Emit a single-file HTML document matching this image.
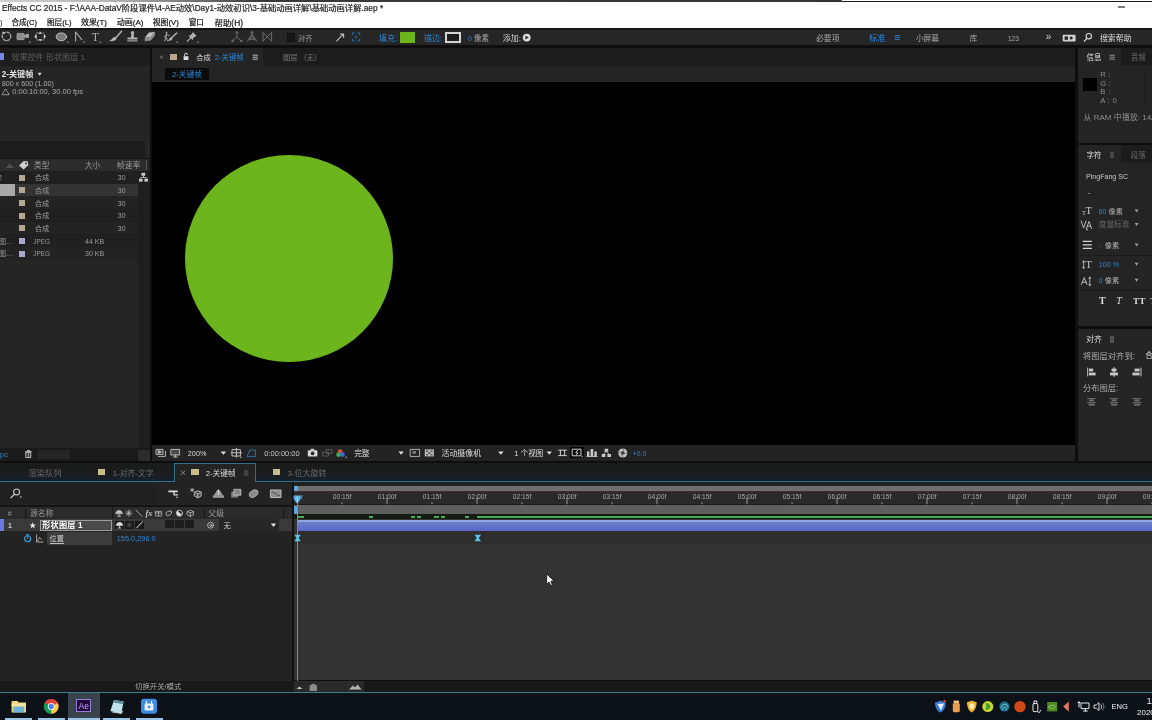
<!DOCTYPE html>
<html lang="zh">
<head>
<meta charset="utf-8">
<title>After Effects CC 2015</title>
<style>
*{box-sizing:border-box;margin:0;padding:0}
html,body{width:1152px;height:720px;overflow:hidden;background:#0e0e0e}
body{position:relative;font-family:"Liberation Sans","Noto Sans CJK SC",sans-serif;font-size:8px;color:#a8a8a8}
.a{position:absolute}
.t{position:absolute;white-space:nowrap;line-height:14px;height:14px}
svg{overflow:visible}
</style>
</head>
<body>
<!-- ===== title + menu ===== -->
<div class="a" style="left:0;top:0;width:1152px;height:27.8px;background:#fff"></div>
<div class="a" style="left:0;top:0;width:841px;height:1.6px;background:linear-gradient(90deg,#d0d0d0 0,#b0b0b0 120px,#3a3a3a 260px,#333 100%)"></div>
<div class="a" style="left:841px;top:0.9px;width:311px;height:1.1px;background:#1a1a1a"></div>
<div class="a" style="left:840.5px;top:0;width:1px;height:2px;background:#555"></div>
<div class="a" style="left:1118px;top:6px;width:7px;height:2px;background:#7a7a7a"></div>
<!-- ===== toolbar ===== -->
<div class="a" style="left:0;top:27.8px;width:1152px;height:2.4px;background:#141414"></div>
<div class="a" style="left:0;top:30px;width:1152px;height:15.2px;background:#262626"></div>
<div class="a" style="left:286.5px;top:33px;width:8.5px;height:8.5px;background:#181818;border:1px solid #101010"></div>
<div class="a" style="left:400px;top:32px;width:15px;height:11px;background:#6db51c"></div>
<div class="a" style="left:445px;top:32px;width:15.5px;height:11px;background:#1e1e1e;border:2px solid #d4d4d4"></div>

<!-- ===== left panel ===== -->
<div class="a" style="left:0;top:48px;width:150px;height:18px;background:#1d1d1d"></div>
<div class="a" style="left:0;top:66px;width:150px;height:395px;background:#252525"></div>
<div class="a" style="left:0;top:52.6px;width:4.2px;height:7.8px;background:#7b86e8"></div>
<div class="a" style="left:0;top:140.7px;width:144.5px;height:17.5px;background:#1c1c1c"></div>
<div class="a" style="left:0;top:157.6px;width:150px;height:1px;background:#151515"></div>
<div class="a" style="left:0;top:158.5px;width:146px;height:13px;background:#2c2c2c"></div>
<div class="a" style="left:145.5px;top:160px;width:1px;height:10px;background:#555"></div>
<div class="a" style="left:0;top:171.3px;width:138px;height:12.3px;background:#202020"></div>
<div class="a" style="left:0;top:183.6px;width:138px;height:12.8px;background:#343434"></div>
<div class="a" style="left:0;top:184.2px;width:15px;height:11.6px;background:#a8a8a8"></div>
<div class="a" style="left:0;top:196.4px;width:138px;height:12.6px;background:#232323"></div>
<div class="a" style="left:0;top:209px;width:138px;height:12.8px;background:#202020"></div>
<div class="a" style="left:0;top:221.8px;width:138px;height:12.6px;background:#232323"></div>
<div class="a" style="left:0;top:234.4px;width:138px;height:12.8px;background:#202020"></div>
<div class="a" style="left:0;top:247.2px;width:138px;height:12.8px;background:#232323"></div>
<div class="a" style="left:138px;top:171.3px;width:12px;height:277px;background:#1e1e1e"></div>
<div class="a" style="left:0;top:448px;width:150px;height:13px;background:#1a1a1a"></div>
<div class="a" style="left:138px;top:450px;width:12px;height:11px;background:#2c2c2c"></div>
<div class="a" style="left:38px;top:450px;width:32px;height:9px;background:#262626"></div>
<!-- file label squares -->
<div class="a" style="left:19.2px;top:174.6px;width:6px;height:6px;background:#b5a88e"></div>
<div class="a" style="left:19.2px;top:187.4px;width:6px;height:6px;background:#b5a88e"></div>
<div class="a" style="left:19.2px;top:200.2px;width:6px;height:6px;background:#b5a88e"></div>
<div class="a" style="left:19.2px;top:212.8px;width:6px;height:6px;background:#b5a88e"></div>
<div class="a" style="left:19.2px;top:225.4px;width:6px;height:6px;background:#b5a88e"></div>
<div class="a" style="left:19.2px;top:238.2px;width:6px;height:6px;background:#a9a9d0"></div>
<div class="a" style="left:19.2px;top:250.8px;width:6px;height:6px;background:#a9a9d0"></div>

<!-- ===== comp panel ===== -->
<div class="a" style="left:152.3px;top:48px;width:923px;height:18.3px;background:#1c1c1c"></div>
<div class="a" style="left:152.3px;top:48px;width:111.2px;height:18.3px;background:#242424"></div>
<div class="a" style="left:152.3px;top:66.3px;width:923px;height:15.5px;background:#242424"></div>
<div class="a" style="left:165.4px;top:68.3px;width:43.6px;height:11.3px;background:#0b0b0b"></div>
<div class="a" style="left:169.7px;top:53.5px;width:6.9px;height:6.5px;background:#b5a88e"></div>
<div class="a" style="left:152.3px;top:81.8px;width:923px;height:363.4px;background:#000"></div>
<div class="a" style="left:184.9px;top:154.7px;width:207.8px;height:207.8px;border-radius:50%;background:#6db51c"></div>
<div class="a" style="left:152.3px;top:445.2px;width:923px;height:15.6px;background:#232323"></div>
<div class="a" style="left:570.3px;top:447px;width:14px;height:11.2px;background:#080808"></div>

<!-- ===== right panels ===== -->
<div class="a" style="left:1078px;top:47.6px;width:74px;height:17.8px;background:#1c1c1c"></div>
<div class="a" style="left:1078px;top:47.6px;width:42.8px;height:17.8px;background:#242424"></div>
<div class="a" style="left:1078px;top:65.4px;width:74px;height:77.2px;background:#242424"></div>
<div class="a" style="left:1083px;top:77.9px;width:13.8px;height:12.8px;background:#000"></div>
<div class="a" style="left:1145px;top:72px;width:1px;height:34px;background:#1f1f1f"></div>

<div class="a" style="left:1078px;top:145px;width:74px;height:18.2px;background:#1c1c1c"></div>
<div class="a" style="left:1078px;top:145px;width:42.8px;height:18.2px;background:#242424"></div>
<div class="a" style="left:1078px;top:163.2px;width:74px;height:163px;background:#242424"></div>
<div class="a" style="left:1110.2px;top:151.6px;width:4px;height:6.8px;background:#484848"></div>
<div class="a" style="left:1080px;top:255px;width:72px;height:1px;background:#1b1b1b"></div>
<div class="a" style="left:1080px;top:290.2px;width:72px;height:1px;background:#1b1b1b"></div>

<div class="a" style="left:1078px;top:329.2px;width:74px;height:131.6px;background:#242424"></div>
<div class="a" style="left:1110px;top:336.4px;width:4px;height:6.4px;background:#505050"></div>

<!-- ===== timeline ===== -->
<div class="a" style="left:0;top:463px;width:1152px;height:18.4px;background:linear-gradient(#1b1b1b 0,#1b1c1d 50%,#15212a 100%)"></div>
<div class="a" style="left:0;top:481.4px;width:293px;height:23.2px;background:#232323"></div>
<div class="a" style="left:0;top:484px;width:158px;height:19px;background:#202020"></div>
<div class="a" style="left:0;top:504.6px;width:293px;height:2px;background:#141414"></div>
<div class="a" style="left:0;top:506.5px;width:293px;height:12.5px;background:#2b2b2b"></div>
<div class="a" style="left:0;top:519.3px;width:293px;height:12px;background:#3a3a3a"></div>
<div class="a" style="left:0;top:531.3px;width:293px;height:149.7px;background:#232323"></div>
<div class="a" style="left:0;top:519.3px;width:3.6px;height:12px;background:#6a7ae0"></div>
<!-- header dividers -->
<div class="a" style="left:25.4px;top:507.5px;width:1px;height:10.5px;background:#161616"></div>
<div class="a" style="left:112px;top:507.5px;width:1px;height:10.5px;background:#161616"></div>
<div class="a" style="left:204.4px;top:507.5px;width:1px;height:10.5px;background:#161616"></div>
<div class="a" style="left:282.6px;top:507.5px;width:1px;height:10.5px;background:#161616"></div>
<!-- layer name box -->
<div class="a" style="left:40px;top:519.5px;width:71.7px;height:11.2px;background:#4a4a4a;border:1px solid #9c9c9c"></div>
<div class="a" style="left:47px;top:532px;width:65px;height:12.6px;background:#3d3d3d"></div>
<div class="a" style="left:49.5px;top:542.6px;width:14.3px;height:1px;background:#bdbdbd"></div>
<!-- switches -->
<div class="a" style="left:115.2px;top:520.8px;width:8.5px;height:8px;background:#181818"></div>
<div class="a" style="left:125px;top:520.8px;width:8.5px;height:8px;background:#181818"></div>
<div class="a" style="left:135.2px;top:520.8px;width:8.7px;height:8px;background:#181818"></div>
<div class="a" style="left:165.4px;top:520px;width:8.3px;height:8.2px;background:#1c1c1c"></div>
<div class="a" style="left:175.4px;top:520px;width:8.6px;height:8.2px;background:#1c1c1c"></div>
<div class="a" style="left:185.4px;top:520px;width:8.2px;height:8.2px;background:#1c1c1c"></div>
<div class="a" style="left:219px;top:519.3px;width:60px;height:12px;background:#262626"></div>
<!-- active tab -->
<div class="a" style="left:174px;top:463px;width:82px;height:19px;background:#232323;border:1px solid #2f6f8a;border-bottom:none"></div>
<div class="a" style="left:0;top:481px;width:174px;height:1px;background:#2f6f8a"></div>
<div class="a" style="left:256px;top:481px;width:896px;height:1px;background:#2f6f8a"></div>
<div class="a" style="left:98px;top:469.3px;width:7px;height:6.2px;background:#c8bd8a"></div>
<div class="a" style="left:191.4px;top:469.3px;width:7.6px;height:6.2px;background:#c8bd8a"></div>
<div class="a" style="left:273px;top:469.3px;width:7px;height:6.2px;background:#c8bd8a"></div>

<!-- time area -->
<div class="a" style="left:291.6px;top:482px;width:2px;height:199px;background:#111"></div>
<div class="a" style="left:293.5px;top:482px;width:858.5px;height:4.4px;background:#222"></div>
<div class="a" style="left:293.5px;top:486.2px;width:858.5px;height:4.8px;background:#6e6e6e"></div>
<div class="a" style="left:293.5px;top:486.2px;width:4.5px;height:4.8px;background:#5aa8e0"></div>
<div class="a" style="left:293.5px;top:491px;width:858.5px;height:13.4px;background:#2a2a2a"></div>
<div class="a" style="left:293.5px;top:491px;width:858.5px;height:1px;background:#43283f"></div>
<div class="a" style="left:293.5px;top:504.2px;width:858.5px;height:0.7px;background:#1a1a1a"></div>
<div class="a" style="left:293.5px;top:504.8px;width:858.5px;height:9.2px;background:#5f5f5f"></div>
<div class="a" style="left:293.5px;top:514px;width:858.5px;height:5.4px;background:#121a12"></div>
<div class="a" style="left:293.5px;top:519.4px;width:858.5px;height:11.8px;background:#333"></div>
<div class="a" style="left:297.5px;top:519.6px;width:854.5px;height:11.4px;background:linear-gradient(#90a6e2 0,#90a6e2 1.5px,#6b80cc 2.2px,#5a66c8 100%)"></div>
<div class="a" style="left:293.5px;top:531.2px;width:858.5px;height:12.6px;background:#2e2e2e"></div>
<div class="a" style="left:293.5px;top:543.8px;width:858.5px;height:136.4px;background:#333"></div>
<!-- green cache -->
<div class="a" style="left:297.5px;top:515.6px;width:6px;height:2.4px;background:#4aa858"></div>
<div class="a" style="left:369.2px;top:515.6px;width:4.2px;height:2.4px;background:#4aa858"></div>
<div class="a" style="left:410.8px;top:515.6px;width:4.2px;height:2.4px;background:#4aa858"></div>
<div class="a" style="left:417.2px;top:515.6px;width:3.8px;height:2.4px;background:#4aa858"></div>
<div class="a" style="left:434.4px;top:515.6px;width:4.2px;height:2.4px;background:#4aa858"></div>
<div class="a" style="left:440.6px;top:515.6px;width:4.4px;height:2.4px;background:#4aa858"></div>
<div class="a" style="left:465px;top:515.6px;width:4.2px;height:2.4px;background:#4aa858"></div>
<div class="a" style="left:476.7px;top:515.6px;width:675.3px;height:2.4px;background:#4aa858"></div>
<!-- work area handle + playhead line -->
<div class="a" style="left:293.5px;top:505.6px;width:3.6px;height:8.2px;background:#5aa8e0;border-radius:1px"></div>
<div class="a" style="left:296.7px;top:503px;width:1px;height:178px;background:#3aa0e0"></div>
<!-- bottom bar -->
<div class="a" style="left:0;top:681px;width:1152px;height:11px;background:#191919"></div>
<div class="a" style="left:293.5px;top:681px;width:70px;height:11px;background:#2a2a2a"></div>

<!-- ===== taskbar ===== -->
<div class="a" style="left:0;top:692px;width:1152px;height:28px;background:#0c1218"></div>
<div class="a" style="left:0;top:692px;width:1152px;height:1px;background:#3b7d96"></div>
<div class="a" style="left:68px;top:693px;width:31.8px;height:27px;background:#39434b"></div>
<div class="a" style="left:5.2px;top:718px;width:26.8px;height:2px;background:#9cc4e4"></div>
<div class="a" style="left:37.8px;top:718px;width:26.8px;height:2px;background:#9cc4e4"></div>
<div class="a" style="left:68px;top:718px;width:31.8px;height:2px;background:#9cc4e4"></div>
<div class="a" style="left:103.3px;top:718px;width:26.6px;height:2px;background:#9cc4e4"></div>
<div class="a" style="left:135.8px;top:718px;width:27px;height:2px;background:#9cc4e4"></div>
<div class="a" style="left:76.4px;top:699.4px;width:14.7px;height:13.1px;background:#1f0a3a;border:1px solid #9a7be0"></div>
<!-- ===== text ===== -->
<div id="txt" style="position:absolute;left:0;top:0;width:1152px;height:720px;will-change:transform">
<div class="t" style="left:2.0px;top:1.3px;font-size:8.29px;color:#222;letter-spacing:0.01px;-webkit-text-stroke:0.2px #222">Effects CC 2015 - F:\AAA-DataV阶段课件\4-AE动效\Day1-动效初识\3-基础动画详解\基础动画详解.aep *</div>
<div class="t" style="left:0.0px;top:15.6px;font-size:7.7px;color:#222">)</div>
<div class="t" style="left:11.5px;top:15.6px;font-size:7.54px;color:#111;letter-spacing:-0.01px;-webkit-text-stroke:0.2px #111">合成(C)</div>
<div class="t" style="left:46.9px;top:15.6px;font-size:7.64px;color:#111;letter-spacing:0.01px;-webkit-text-stroke:0.2px #111">图层(L)</div>
<div class="t" style="left:81.0px;top:15.6px;font-size:7.94px;color:#111;-webkit-text-stroke:0.2px #111">效果(T)</div>
<div class="t" style="left:116.7px;top:15.6px;font-size:8.02px;color:#111;-webkit-text-stroke:0.2px #111">动画(A)</div>
<div class="t" style="left:152.8px;top:15.6px;font-size:7.81px;color:#111;-webkit-text-stroke:0.2px #111">视图(V)</div>
<div class="t" style="left:188.7px;top:15.6px;font-size:7.65px;color:#111;letter-spacing:0.02px;-webkit-text-stroke:0.2px #111">窗口</div>
<div class="t" style="left:214.6px;top:15.6px;font-size:8.4px;color:#111;-webkit-text-stroke:0.2px #111">帮助(H)</div>
<div class="t" style="left:91.7px;top:30.2px;font-size:12px;color:#b0b0b0;font-family:'Liberation Serif',serif">T</div>
<div class="t" style="left:298.0px;top:31.9px;font-size:7.31px;color:#969696;letter-spacing:0.01px">对齐</div>
<div class="t" style="left:378.7px;top:31.9px;font-size:8.14px;color:#2b86d6;letter-spacing:0.29px">填充:</div>
<div class="t" style="left:424.0px;top:31.9px;font-size:7.91px;color:#2b86d6;letter-spacing:-0.01px">描边:</div>
<div class="t" style="left:468.0px;top:31.9px;font-size:6.8px;color:#2b86d6">0</div>
<div class="t" style="left:474.0px;top:31.9px;font-size:7.5px;color:#a8a8a8">像素</div>
<div class="t" style="left:502.8px;top:31.9px;font-size:8.0px;color:#cfcfcf;letter-spacing:-0.02px">添加:</div>
<div class="t" style="left:816.0px;top:31.9px;font-size:7.84px;color:#a8a8a8">必要项</div>
<div class="t" style="left:869.0px;top:31.9px;font-size:8.26px;color:#2b86d6">标准</div>
<div class="t" style="left:915.9px;top:31.9px;font-size:7.71px;color:#a8a8a8">小屏幕</div>
<div class="t" style="left:969.7px;top:31.9px;font-size:7.6px;color:#a8a8a8">库</div>
<div class="t" style="left:1008.0px;top:31.9px;font-size:6.47px;color:#a8a8a8">123</div>
<div class="t" style="left:1045.7px;top:30.0px;font-size:10px;color:#d0d0d0">»</div>
<div class="t" style="left:1099.9px;top:31.9px;font-size:7.95px;color:#dcdcdc;letter-spacing:0.02px">搜索帮助</div>
<div class="t" style="left:11.4px;top:51.1px;font-size:8.08px;color:#5e5e5e">效果控件 形状图层 1</div>
<div class="t" style="left:1.7px;top:67.9px;font-size:8.13px;color:#e4e4e4;font-weight:bold">2-关键帧</div>
<div class="t" style="left:1.7px;top:76.6px;font-size:7.17px;color:#a8a8a8">800 x 600 (1.00)</div>
<div class="t" style="left:12.2px;top:85.3px;font-size:7.53px;color:#a8a8a8;letter-spacing:0.01px">0:00:10:00, 30.00 fps</div>
<div class="t" style="left:34.0px;top:158.9px;font-size:7.65px;color:#9a9a9a;letter-spacing:0.02px">类型</div>
<div class="t" style="left:85.0px;top:158.9px;font-size:7.5px;color:#9a9a9a">大小</div>
<div class="t" style="left:116.7px;top:158.9px;font-size:7.87px;color:#9a9a9a">帧速率</div>
<div class="t" style="left:34.7px;top:170.9px;font-size:7.3px;color:#9a9a9a;letter-spacing:0.01px">合成</div>
<div class="t" style="left:117.4px;top:170.9px;font-size:7.45px;color:#9a9a9a;letter-spacing:0.02px">30</div>
<div class="t" style="left:34.7px;top:183.8px;font-size:7.3px;color:#9a9a9a;letter-spacing:0.01px">合成</div>
<div class="t" style="left:117.4px;top:183.8px;font-size:7.45px;color:#9a9a9a;letter-spacing:0.02px">30</div>
<div class="t" style="left:34.7px;top:196.6px;font-size:7.3px;color:#9a9a9a;letter-spacing:0.01px">合成</div>
<div class="t" style="left:117.4px;top:196.6px;font-size:7.45px;color:#9a9a9a;letter-spacing:0.02px">30</div>
<div class="t" style="left:34.7px;top:209.3px;font-size:7.3px;color:#9a9a9a;letter-spacing:0.01px">合成</div>
<div class="t" style="left:117.4px;top:209.3px;font-size:7.45px;color:#9a9a9a;letter-spacing:0.02px">30</div>
<div class="t" style="left:34.7px;top:221.9px;font-size:7.3px;color:#9a9a9a;letter-spacing:0.01px">合成</div>
<div class="t" style="left:117.4px;top:221.9px;font-size:7.45px;color:#9a9a9a;letter-spacing:0.02px">30</div>
<div class="t" style="left:33.3px;top:234.6px;font-size:6.39px;color:#9a9a9a;letter-spacing:0.01px">JPEG</div>
<div class="t" style="left:33.3px;top:247.3px;font-size:6.39px;color:#9a9a9a;letter-spacing:0.01px">JPEG</div>
<div class="t" style="left:85.0px;top:234.6px;font-size:7.09px;color:#9a9a9a">44 KB</div>
<div class="t" style="left:85.0px;top:247.3px;font-size:7.09px;color:#9a9a9a">30 KB</div>
<div class="t" style="left:-2.0px;top:170.9px;font-size:7px;color:#9a9a9a">2</div>
<div class="t" style="left:-1.0px;top:234.6px;font-size:7.0px;color:#9a9a9a">图…</div>
<div class="t" style="left:-1.0px;top:247.3px;font-size:7.0px;color:#9a9a9a">图…</div>
<div class="t" style="left:0.0px;top:447.6px;font-size:7.56px;color:#2b86d6;letter-spacing:0.02px">pc</div>
<div class="t" style="left:196.3px;top:50.8px;font-size:7.26px;color:#dcdcdc;letter-spacing:-0.02px">合成</div>
<div class="t" style="left:214.8px;top:50.8px;font-size:7.46px;color:#2b86d6">2-关键帧</div>
<div class="t" style="left:283.0px;top:50.8px;font-size:7.26px;color:#7a7a7a;letter-spacing:0.01px">图层 （无）</div>
<div class="t" style="left:172.0px;top:67.6px;font-size:7.72px;color:#2b86d6;letter-spacing:-0.01px">2-关键帧</div>
<div class="t" style="left:187.8px;top:446.6px;font-size:7.27px;color:#d8d8d8">200%</div>
<div class="t" style="left:264.2px;top:446.6px;font-size:7.51px;color:#c8c8c8;letter-spacing:0.01px">0:00:00:00</div>
<div class="t" style="left:354.2px;top:446.6px;font-size:7.66px;color:#dcdcdc;letter-spacing:-0.03px">完整</div>
<div class="t" style="left:441.6px;top:446.6px;font-size:7.89px;color:#dcdcdc;letter-spacing:0.01px">活动摄像机</div>
<div class="t" style="left:514.2px;top:446.6px;font-size:7.62px;color:#dcdcdc">1 个视图</div>
<div class="t" style="left:632.8px;top:446.6px;font-size:6.78px;color:#2b86d6;letter-spacing:0.01px">+0.0</div>
<div class="t" style="left:1086.4px;top:50.8px;font-size:7.51px;color:#dcdcdc">信息</div>
<div class="t" style="left:1130.8px;top:50.8px;font-size:7.46px;color:#686868;letter-spacing:-0.02px">音频</div>
<div class="t" style="left:1100.2px;top:68.0px;font-size:7.7px;color:#8c8c8c;letter-spacing:0.29px">R :</div>
<div class="t" style="left:1100.2px;top:76.6px;font-size:7.7px;color:#8c8c8c;letter-spacing:0.07px">G :</div>
<div class="t" style="left:1100.2px;top:85.2px;font-size:7.7px;color:#8c8c8c;letter-spacing:0.50px">B :</div>
<div class="t" style="left:1100.2px;top:93.9px;font-size:7.7px;color:#8c8c8c;letter-spacing:0.28px">A :  0</div>
<div class="t" style="left:1083.4px;top:111.2px;font-size:8.03px;color:#8c8c8c;letter-spacing:0.01px">从 RAM 中播放: 14/</div>
<div class="t" style="left:1086.4px;top:148.6px;font-size:7.51px;color:#dcdcdc">字符</div>
<div class="t" style="left:1130.8px;top:148.6px;font-size:7.46px;color:#686868;letter-spacing:-0.02px">段落</div>
<div class="t" style="left:1086.0px;top:169.8px;font-size:7.07px;color:#c8c8c8">PingFang SC</div>
<div class="t" style="left:1088.0px;top:185.8px;font-size:7.4px;color:#c8c8c8">-</div>
<div class="t" style="left:1098.7px;top:204.6px;font-size:6.83px;color:#2b86d6;letter-spacing:-0.01px">60</div>
<div class="t" style="left:1108.6px;top:204.6px;font-size:7.1px;color:#b0b0b0;letter-spacing:0.01px">像素</div>
<div class="t" style="left:1098.7px;top:217.9px;font-size:7.71px;color:#686868">度量标准</div>
<div class="t" style="left:1098.7px;top:239.1px;font-size:7px;color:#686868">-</div>
<div class="t" style="left:1104.8px;top:239.1px;font-size:7.25px;color:#b0b0b0;letter-spacing:-0.02px">像素</div>
<div class="t" style="left:1098.7px;top:257.9px;font-size:7.27px;color:#2b86d6">100 %</div>
<div class="t" style="left:1098.7px;top:273.9px;font-size:6.8px;color:#2b86d6">0</div>
<div class="t" style="left:1104.8px;top:273.9px;font-size:7.25px;color:#b0b0b0;letter-spacing:-0.02px">像素</div>
<div class="t" style="left:1099.0px;top:294.1px;font-size:10px;color:#dcdcdc;font-family:'Liberation Serif',serif;font-weight:bold">T</div>
<div class="t" style="left:1116.2px;top:294.1px;font-size:10px;color:#dcdcdc;font-family:'Liberation Serif',serif;font-style:italic">T</div>
<div class="t" style="left:1133.0px;top:294.1px;font-size:9.21px;color:#dcdcdc;letter-spacing:0.02px;font-family:'Liberation Serif',serif;font-weight:bold">TT</div>
<div class="t" style="left:1150.3px;top:294.6px;font-size:8px;color:#dcdcdc;font-family:'Liberation Serif',serif;font-weight:bold">T</div>
<div class="t" style="left:1082.0px;top:205.8px;font-size:6.5px;color:#c8c8c8;font-family:'Liberation Serif',serif">T</div>
<div class="t" style="left:1085.4px;top:204.2px;font-size:10.5px;color:#c8c8c8;font-family:'Liberation Serif',serif">T</div>
<div class="t" style="left:1085.6px;top:258.2px;font-size:10.5px;color:#c8c8c8;font-family:'Liberation Serif',serif">T</div>
<div class="t" style="left:1086.0px;top:332.9px;font-size:8.01px;color:#dcdcdc">对齐</div>
<div class="t" style="left:1083.0px;top:349.4px;font-size:8.29px;color:#a8a8a8">将图层对齐到:</div>
<div class="t" style="left:1145.3px;top:349.4px;font-size:7.6px;color:#dcdcdc">合</div>
<div class="t" style="left:1083.0px;top:381.9px;font-size:8.24px;color:#a8a8a8;letter-spacing:-0.01px">分布图层:</div>
<div class="t" style="left:28.6px;top:466.6px;font-size:8.26px;color:#6a6a6a">渲染队列</div>
<div class="t" style="left:112.8px;top:466.6px;font-size:7.82px;color:#6a6a6a">1-对齐-文字</div>
<div class="t" style="left:205.7px;top:466.6px;font-size:7.72px;color:#dcdcdc;letter-spacing:-0.01px">2-关键帧</div>
<div class="t" style="left:287.5px;top:466.6px;font-size:8.0px;color:#6a6a6a">3-位大旋转</div>
<div class="t" style="left:7.8px;top:506.6px;font-size:7px;color:#9a9a9a">#</div>
<div class="t" style="left:30.0px;top:506.6px;font-size:7.8px;color:#9a9a9a">源名称</div>
<div class="t" style="left:208.3px;top:506.6px;font-size:7.85px;color:#9a9a9a;letter-spacing:0.01px">父级</div>
<div class="t" style="left:8.0px;top:519.0px;font-size:7px;color:#cfcfcf;font-weight:bold">1</div>
<div class="t" style="left:42.3px;top:519.0px;font-size:8.14px;color:#fff;letter-spacing:0.18px;font-weight:bold">形状图层 1</div>
<div class="t" style="left:223.4px;top:519.0px;font-size:7.4px;color:#cfcfcf">无</div>
<div class="t" style="left:49.5px;top:532.1px;font-size:7.15px;color:#cfcfcf">位置</div>
<div class="t" style="left:116.7px;top:532.1px;font-size:7.39px;color:#2b86d6">155.0,296.0</div>
<div class="t" style="left:332.7px;top:490.4px;font-size:6.7px;color:#a8a8a8">00:15f</div>
<div class="t" style="left:377.7px;top:490.4px;font-size:6.7px;color:#a8a8a8">01:00f</div>
<div class="t" style="left:422.7px;top:490.4px;font-size:6.7px;color:#a8a8a8">01:15f</div>
<div class="t" style="left:467.7px;top:490.4px;font-size:6.7px;color:#a8a8a8">02:00f</div>
<div class="t" style="left:512.7px;top:490.4px;font-size:6.7px;color:#a8a8a8">02:15f</div>
<div class="t" style="left:557.7px;top:490.4px;font-size:6.7px;color:#a8a8a8">03:00f</div>
<div class="t" style="left:602.7px;top:490.4px;font-size:6.7px;color:#a8a8a8">03:15f</div>
<div class="t" style="left:647.7px;top:490.4px;font-size:6.7px;color:#a8a8a8">04:00f</div>
<div class="t" style="left:692.7px;top:490.4px;font-size:6.7px;color:#a8a8a8">04:15f</div>
<div class="t" style="left:737.7px;top:490.4px;font-size:6.7px;color:#a8a8a8">05:00f</div>
<div class="t" style="left:782.7px;top:490.4px;font-size:6.7px;color:#a8a8a8">05:15f</div>
<div class="t" style="left:827.7px;top:490.4px;font-size:6.7px;color:#a8a8a8">06:00f</div>
<div class="t" style="left:872.7px;top:490.4px;font-size:6.7px;color:#a8a8a8">06:15f</div>
<div class="t" style="left:917.7px;top:490.4px;font-size:6.7px;color:#a8a8a8">07:00f</div>
<div class="t" style="left:962.7px;top:490.4px;font-size:6.7px;color:#a8a8a8">07:15f</div>
<div class="t" style="left:1007.7px;top:490.4px;font-size:6.7px;color:#a8a8a8">08:00f</div>
<div class="t" style="left:1052.7px;top:490.4px;font-size:6.7px;color:#a8a8a8">08:15f</div>
<div class="t" style="left:1097.7px;top:490.4px;font-size:6.7px;color:#a8a8a8">09:00f</div>
<div class="t" style="left:1142.7px;top:490.4px;font-size:6.7px;color:#a8a8a8">09:15f</div>
<div class="t" style="left:301.0px;top:490.4px;font-size:6.2px;color:#a8a8a8">f</div>
<div class="t" style="left:135.0px;top:680.1px;font-size:7.4px;color:#a8a8a8">切换开关/模式</div>
<div class="t" style="left:1111.5px;top:700.0px;font-size:7.62px;color:#f0f0f0">ENG</div>
<div class="t" style="left:1146.8px;top:693.6px;font-size:8.57px;color:#f0f0f0;letter-spacing:0.01px">11</div>
<div class="t" style="left:1137.0px;top:706.2px;font-size:8.0px;color:#f0f0f0">2020</div>
<div class="t" style="left:78.6px;top:698.8px;font-size:8.49px;color:#c7a8ff;letter-spacing:0.01px">Ae</div>
</div>
<svg class="a" style="left:0;top:0" width="1152" height="720" viewBox="0 0 1152 720" fill="none" stroke-linecap="round" stroke-linejoin="round">
<!-- ===== toolbar icons ===== -->
<g stroke="#b0b0b0" stroke-width="1.2">
  <!-- rotate -->
  <circle cx="6.5" cy="36.4" r="4.3" stroke-dasharray="2.6 1.6" stroke-dashoffset="-3.4"/>
  <path d="M1.8 33.8 L3 31.4 L5.4 33.4 Z" fill="#c8c8c8" stroke="none"/>
  <!-- camera -->
  <rect x="17" y="33.4" width="7.2" height="6.3" rx="0.8" fill="#8c8c8c" stroke="#b4b4b4" stroke-width="0.7"/>
  <path d="M24.4 35 L28.8 33.4 L28.8 38 L24.4 37.4 Z" fill="#a8a8a8" stroke="none"/>
  <!-- pan behind -->
  <rect x="36" y="33" width="8.4" height="7" rx="1" stroke-dasharray="1.5 1.3" stroke-width="0.9" stroke="#9a9a9a"/>
  <path d="M34.2 36.5 L36.6 34.6 V38.4 Z M46.2 36.5 L43.8 34.6 V38.4 Z M40.2 31.8 L38.4 33.8 H42 Z M40.2 41.2 L38.4 39.2 H42 Z" fill="#d6d6d6" stroke="none"/>
  <!-- ellipse -->
  <ellipse cx="61.4" cy="36.8" rx="5.2" ry="3.9" fill="#7a7a7a" stroke="#c4c4c4" stroke-width="1"/>
  <!-- pen -->
  <path d="M75.6 41 V32 L81.8 39.6" stroke-width="1.1"/>
  <!-- brush -->
  <path d="M121.6 31.2 L115.4 38.2" stroke-width="1.5"/>
  <path d="M110 40.8 C112.4 41.4 116 40.6 116.2 38.6 L114.6 37.2 C112.4 37.6 112.4 39.8 110 40.8 Z" fill="#b8b8b8" stroke="#b8b8b8" stroke-width="0.5"/>
  <!-- stamp -->
  <circle cx="132.5" cy="32.9" r="1.8" fill="#b0b0b0" stroke="none"/>
  <path d="M131.4 33.6 h2.2 l0.5 3.8 h3.4 v2 h-10 v-2 h3.4 Z" fill="#b0b0b0" stroke="none"/>
  <rect x="127.3" y="40.2" width="10.2" height="1.3" fill="#9a9a9a" stroke="none"/>
  <!-- eraser -->
  <path d="M149 32.6 L155 32 L150.8 37 L144.8 37.6 Z" fill="#c0c0c0" stroke="none"/>
  <path d="M144.8 37.6 L150.8 37 L155 32 V35.4 L150.8 40.6 L144.8 41.2 Z" fill="#8e8e8e" stroke="none"/>
  <!-- roto -->
  <path d="M176.8 33 L171 38.4" stroke-width="1.5"/>
  <path d="M168.4 40.4 C170 40.8 172.4 40 172.2 38.4 L171 37.4 C169.6 37.8 169.8 39.4 168.4 40.4 Z" fill="#b8b8b8" stroke="#b8b8b8" stroke-width="0.4"/>
  <circle cx="166.6" cy="32.6" r="0.9" fill="#b0b0b0" stroke="none"/>
  <path d="M166.4 33.8 L166 37 L164.6 41 M166 37 L167.6 41 M166.4 34.6 L169.4 35.4 M166.2 34.8 L164.4 36.8" stroke-width="0.9"/>
  <!-- pin -->
  <path d="M192.8 32 L196.8 36 L195.2 36.4 L193 38.6 L192.8 40.2 L188.4 35.8 L190 35.6 L192.2 33.4 Z" fill="#b0b0b0" stroke="none"/>
  <path d="M190.6 38 L187.2 41.4" stroke-width="1.1"/>
</g>
<!-- small corner dots -->
<g fill="#8a8a8a" stroke="none">
  <rect x="29" y="41.4" width="1.4" height="1.4"/><rect x="67.2" y="41.4" width="1.4" height="1.4"/><rect x="83.4" y="41.4" width="1.4" height="1.4"/><rect x="99.6" y="41.4" width="1.4" height="1.4"/><rect x="176.4" y="41.4" width="1.4" height="1.4"/><rect x="197.4" y="41.4" width="1.4" height="1.4"/>
</g>
<!-- axis icons (dim) -->
<g stroke="#6c6c6c" stroke-width="1">
  <path d="M236.8 32.2 V37 L232.6 41 M236.8 37 L241.2 41"/><circle cx="236.8" cy="32.4" r="0.9"/><circle cx="232.6" cy="41" r="0.9"/><circle cx="241.2" cy="41" r="0.9"/>
  <path d="M252 32.2 V37 L247.4 41 M252 37 L256.6 41 M248.6 39 L252 34 L255.4 39 Z"/><circle cx="252" cy="32.4" r="0.9"/>
  <path d="M263 32.6 L271.6 41 M271.6 32.6 L263 41 M263 32.6 V41 M271.6 32.6 V41"/>
</g>
<!-- expand -->
<path d="M336.8 40.8 L343 34.4 M340.2 34 H343.6 V37.4" stroke="#c0c0c0" stroke-width="1.1"/>
<!-- blue bracket -->
<path d="M352.4 35 V33 H354.6 M357.6 33 H359.8 V35 M359.8 39 V41 H357.6 M354.6 41 H352.4 V39" stroke="#266fa8" stroke-width="1"/>
<rect x="354.8" y="35.6" width="2.6" height="2.8" fill="#1f5580"/>
<!-- add play -->
<circle cx="526.7" cy="37.6" r="3.9" fill="#dedede"/>
<path d="M525.4 35.6 L528.8 37.6 L525.4 39.6 Z" fill="#262626"/>
<!-- workspace menu -->
<path d="M895.2 35.6 H899.6 M895.2 37.6 H899.6 M895.2 39.6 H899.6" stroke="#2b86d6" stroke-width="0.9"/>
<!-- sync icon -->
<rect x="1062.7" y="34.8" width="12.9" height="6.6" rx="0.8" fill="#cfcfcf"/>
<rect x="1064.6" y="36.4" width="3.4" height="3.4" fill="#262626"/><circle cx="1071.2" cy="38.1" r="1.5" fill="#262626"/>
<!-- search -->
<circle cx="1088.8" cy="36.2" r="2.7" stroke="#d6d6d6" stroke-width="1.1"/>
<path d="M1086.8 38.4 L1084.4 41.2" stroke="#d6d6d6" stroke-width="1.3"/>

<!-- ===== left panel ===== -->
<path d="M37.8 72.8 H41.6 L39.7 75.8 Z" fill="#e0e0e0"/>
<path d="M2.2 94.4 L5.6 88.8 L9 94.4 Z" stroke="#a8a8a8" stroke-width="0.8"/>
<path d="M5.8 168 L9.8 163.6 L13.8 168 Z" fill="#505050"/>
<path d="M19 165.4 L23.4 161.2 L27.6 161.2 L28.4 165 L23.6 169.6 Z" fill="#cfcfcf"/><circle cx="26" cy="163.4" r="0.9" fill="#2c2c2c"/>
<!-- flowchart icon -->
<g fill="#c8c8c8"><rect x="141.4" y="172.8" width="3.8" height="3"/><rect x="139" y="178.6" width="3.6" height="3"/><rect x="144.4" y="178.6" width="3.6" height="3"/><rect x="143" y="175.8" width="0.9" height="1.8"/><rect x="140.4" y="177.2" width="6.2" height="0.8"/></g>
<!-- trash -->
<g stroke="#c8c8c8" stroke-width="0.9"><path d="M25.6 451.6 H31.4 M27.4 451.4 V450.4 H29.6 V451.4"/><rect x="26.2" y="452.6" width="4.6" height="5" fill="#3a3a3a"/><path d="M28.5 453.6 V456.6" stroke-width="0.7"/></g>

<!-- ===== comp tab ===== -->
<path d="M160.2 55.8 L162.8 58.4 M162.8 55.8 L160.2 58.4" stroke="#8a8a8a" stroke-width="0.8"/>
<!-- lock -->
<rect x="183.6" y="56.2" width="4.8" height="3.8" fill="#dcdcdc"/><path d="M184.6 56 V54.6 A1.4 1.4 0 0 1 187.4 54.6" stroke="#dcdcdc" stroke-width="1"/>
<path d="M253 55.2 H257.6 M253 57.2 H257.6 M253 59.2 H257.6" stroke="#c8c8c8" stroke-width="0.9"/>
<!-- info menu -->
<path d="M1109.8 55.2 H1114.6 M1109.8 57.2 H1114.6 M1109.8 59.2 H1114.6" stroke="#bcbcbc" stroke-width="0.7"/>

<!-- ===== viewer bottom bar ===== -->
<g stroke="#c4c4c4" stroke-width="0.9">
  <rect x="156.4" y="449.4" width="6.6" height="5" fill="#3a3a3a"/><path d="M158.4 456.4 H165.4 V451.4"/><path d="M158.6 450.6 L161.2 451.9 L158.6 453.2 Z" fill="#c4c4c4"/>
  <rect x="171.2" y="449.4" width="8.4" height="5.6" fill="#4a4a4a"/><path d="M173.4 457 H177.4 M175.4 455 V457"/>
</g>
<path d="M220.6 451.4 H226.2 L223.4 454.8 Z" fill="#dcdcdc"/>
<g stroke="#d0d0d0" stroke-width="0.9"><rect x="232.4" y="449.6" width="8" height="6.4"/><path d="M236.4 448.4 V457.2 M231.2 452.8 H241.6"/></g>
<rect x="240.2" y="456.6" width="1.2" height="1.2" fill="#c8c8c8"/>
<g stroke="#2f86c8" stroke-width="0.9"><path d="M247 456.4 L250 450 H255.4 V456.4 Z" stroke-dasharray="1.6 1"/></g>
<!-- camera -->
<rect x="307.8" y="450.2" width="9.6" height="6.2" rx="0.8" fill="#d6d6d6"/><rect x="310.6" y="448.8" width="3.6" height="1.6" fill="#d6d6d6"/><circle cx="312.6" cy="453.4" r="1.8" fill="#232323"/>
<g stroke="#5c5c5c" stroke-width="0.9"><rect x="323" y="452" width="5.6" height="4"/><rect x="326.4" y="449.6" width="5.6" height="4"/></g>
<circle cx="340.2" cy="451.6" r="2.4" fill="#e04a3a"/><circle cx="338.6" cy="454.6" r="2.4" fill="#3fae3f"/><circle cx="342.4" cy="454.6" r="2.4" fill="#3a6ae0"/>
<rect x="345.4" y="456.6" width="1.2" height="1.2" fill="#c8c8c8"/>
<path d="M398.4 451.4 H403.8 L401.1 454.8 Z" fill="#dcdcdc"/>
<g stroke="#c0c0c0" stroke-width="0.9"><rect x="410.6" y="449.4" width="9" height="7"/><rect x="412.4" y="451" width="3.6" height="2.8" fill="#7a7a7a" stroke="none"/></g>
<rect x="424.8" y="449.4" width="9" height="7" fill="#c4c4c4"/><g fill="#5a5a5a"><rect x="426" y="450.4" width="2.2" height="1.8"/><rect x="430.4" y="450.4" width="2.2" height="1.8"/><rect x="428.2" y="452.2" width="2.2" height="1.8"/><rect x="426" y="454" width="2.2" height="1.6"/><rect x="430.4" y="454" width="2.2" height="1.6"/></g>
<path d="M498 451.4 H503.6 L500.8 454.8 Z" fill="#dcdcdc"/>
<path d="M546.6 451.4 H552 L549.3 454.8 Z" fill="#dcdcdc"/>
<g stroke="#d0d0d0" stroke-width="1"><path d="M558.6 450.2 H566.4 M558.6 455.6 H566.4 M560.4 450.2 V455.6 M564.6 450.2 V455.6"/></g>
<g stroke="#e0e0e0" stroke-width="0.9"><rect x="572.6" y="449.2" width="8.4" height="6.6"/><path d="M577.4 450.4 L575.8 452.8 H577.8 L576.4 455"/></g><rect x="581.6" y="456.2" width="1.2" height="1.2" fill="#c8c8c8"/>
<g fill="#c8c8c8"><rect x="587" y="451.4" width="2.4" height="5"/><rect x="590.6" y="449" width="2.6" height="7.4"/><rect x="594.4" y="451.4" width="2.4" height="5"/><rect x="586.6" y="456" width="10.8" height="0.9"/></g>
<g fill="#c8c8c8"><rect x="604.6" y="448.8" width="3.6" height="3"/><rect x="601.8" y="454" width="3.6" height="3"/><rect x="607.4" y="454" width="3.6" height="3"/><path d="M606 451.6 L603.6 454.2 M606.8 451.6 L609 454.2" stroke="#c8c8c8" stroke-width="0.8"/></g>
<circle cx="622.8" cy="453" r="4.6" fill="#c4c4c4"/><circle cx="622.8" cy="453" r="1.7" fill="#3a3a3a"/><path d="M622.8 448.4 L624 451.6 M627.4 453 L624.2 454 M622.8 457.6 L621.6 454.4 M618.2 453 L621.4 452" stroke="#3a3a3a" stroke-width="0.6"/>

<!-- ===== char panel icons ===== -->
<g fill="#c8c8c8" stroke="none" font-family="Liberation Serif, serif">
</g>
<path d="M1134.6 209.6 H1138.6 L1136.6 212.6 Z M1134.6 223 H1138.6 L1136.6 226 Z M1134.6 243.4 H1138.6 L1136.6 246.4 Z M1134.6 262.8 H1138.6 L1136.6 265.8 Z M1134.6 278.8 H1138.6 L1136.6 281.8 Z" fill="#9a9a9a"/>
<path d="M1082.8 241.4 H1091.8 M1082.8 244.9 H1091.8 M1082.8 248.3 H1091.8" stroke="#d6d6d6" stroke-width="1.3" stroke-linecap="butt"/>
<!-- VA -->
<path d="M1081.2 221 L1083.6 228 L1086 221 M1086.4 228.6 L1089 221.4 L1091.6 228.6 M1087.4 226.2 H1090.6" stroke="#c8c8c8" stroke-width="0.9"/>
<circle cx="1087" cy="229.6" r="0.8" fill="#c8c8c8"/>
<!-- IT -->
<path d="M1083.6 261 V268.4 M1082.6 262.2 L1083.6 260.8 L1084.6 262.2 M1082.6 267.2 L1083.6 268.6 L1084.6 267.2" stroke="#c8c8c8" stroke-width="0.8"/>
<!-- A baseline -->
<path d="M1081.4 284.4 L1084.2 277.6 L1087 284.4 M1082.4 282.2 H1086 " stroke="#c8c8c8" stroke-width="0.9"/>
<path d="M1089.8 277 V285.6 M1088.8 278.4 L1089.8 277 L1090.8 278.4 M1088.8 284.4 L1089.8 285.8 L1090.8 284.4" stroke="#c8c8c8" stroke-width="0.8"/>

<!-- ===== align icons ===== -->
<g fill="#c8c8c8"><rect x="1087.2" y="367.6" width="1" height="8.8"/><rect x="1089" y="368.6" width="4.2" height="2.8"/><rect x="1089" y="372.6" width="6.6" height="2.8"/>
<rect x="1113.5" y="367.2" width="1" height="9.6"/><rect x="1111.6" y="368.6" width="4.8" height="2.8"/><rect x="1110" y="372.6" width="8" height="2.8"/>
<rect x="1140.5" y="367.6" width="1" height="8.8"/><rect x="1134.6" y="368.6" width="5" height="2.8"/><rect x="1132.4" y="372.6" width="7.2" height="2.8"/></g>
<g fill="#6e6e6e"><rect x="1087" y="398" width="9" height="0.9"/><rect x="1087" y="402" width="9" height="0.9"/><rect x="1089" y="399.4" width="5" height="2"/><rect x="1088.4" y="403.6" width="6.4" height="2"/>
<rect x="1109.6" y="398" width="9" height="0.9"/><rect x="1109.6" y="402" width="9" height="0.9"/><rect x="1111.6" y="399.4" width="5" height="2"/><rect x="1111" y="403.6" width="6.4" height="2"/>
<rect x="1132.4" y="398" width="9" height="0.9"/><rect x="1132.4" y="402" width="9" height="0.9"/><rect x="1134.4" y="399.4" width="5" height="2"/><rect x="1133.8" y="403.6" width="6.4" height="2"/></g>

<!-- ===== timeline icons ===== -->
<path d="M181.2 470.8 L185 474.6 M185 470.8 L181.2 474.6" stroke="#9a9a9a" stroke-width="0.8"/>
<path d="M244.4 471 H248 M244.4 473 H248 M244.4 475 H248" stroke="#6a6a6a" stroke-width="0.9"/>
<circle cx="16.6" cy="492" r="3" stroke="#c8c8c8" stroke-width="1.1"/><path d="M14.4 494.4 L11 497.8" stroke="#c8c8c8" stroke-width="1.3"/><path d="M19.6 496.6 H22 L20.8 498 Z" fill="#c8c8c8"/>
<g stroke="#c4c4c4" stroke-width="1">
  <path d="M168.4 491.4 H177.6" stroke-width="1.8" stroke="#dcdcdc" stroke-linecap="butt"/>
  <path d="M174 492 V494.8 H178" stroke-width="1.3" stroke="#dcdcdc" stroke-linecap="butt"/>
  <path d="M175.8 496.8 H178.4 L177.1 498.6 Z" fill="#c4c4c4" stroke="none"/>
  <path d="M190.6 489 L193.8 491 M192.2 488.6 V491.4 M190.6 491 L193.8 489" stroke-width="0.8"/>
  <path d="M194.6 492.2 L197.8 490.8 L201.2 492.2 V496 L197.8 497.8 L194.6 496 Z M194.6 492.2 L197.8 493.8 L201.2 492.2 M197.8 493.8 V497.8" stroke="#b4b4b4" fill="#4a4a4a"/>
  <path d="M214.6 495.4 C214.6 490.6 222.2 490.6 222.2 495.4 Z" fill="#9a9a9a" stroke="#b4b4b4" stroke-width="0.6"/>
  <rect x="212.8" y="495.4" width="11.2" height="2.4" fill="#9a9a9a" stroke="none"/>
  <path d="M218.4 494.6 V490.2 M216.6 491.8 L218.4 489.8 L220.2 491.8" stroke="#e6e6e6" stroke-width="0.9"/>
  <rect x="231.2" y="491.6" width="7" height="6" fill="#7e7e7e" stroke="none"/>
  <rect x="234" y="489.2" width="7" height="6.2" fill="#9a9a9a" stroke="#bcbcbc" stroke-width="0.6"/>
  <path d="M235.8 491 H239 M235.8 493 H239" stroke="#5a5a5a" stroke-width="0.7"/>
  <ellipse cx="253.6" cy="493.6" rx="4.8" ry="3.3" transform="rotate(-32 253.6 493.6)" fill="#8a8a8a" stroke="#b4b4b4" stroke-width="0.7"/>
  <rect x="270.8" y="490" width="10.2" height="7.6" fill="#8e8e8e" stroke="#c8c8c8" stroke-width="0.9"/><path d="M271.8 491.8 C275.6 491.8 276 496 280 496" stroke="#3a3a3a" stroke-width="0.8"/>
</g>
<!-- header switch icons -->
<g stroke="#c0c0c0" stroke-width="0.8">
  <path d="M115.8 513.4 C115.8 509.4 122.4 509.4 122.4 513.4 Z" fill="#c0c0c0"/><path d="M119.1 513.4 V516.2 M117.6 516.3 H120.6"/>
  <path d="M128.8 510 V516.4 M125.6 513.2 H132 M126.6 511 L131 515.4 M131 511 L126.6 515.4"/>
  <path d="M136 510 L142 516.4" />
  <path d="M155.6 511.4 h3 v1.6 h-3 Z M158.6 511.4 h3 v1.6 M155.6 513 v3 h3 v-3 M158.6 516 h3 v-3 h-3" stroke-width="0.7"/>
  <ellipse cx="168.8" cy="513.2" rx="3.2" ry="2" transform="rotate(-30 168.8 513.2)"/>
  <circle cx="179.4" cy="513.2" r="3" fill="#101010" stroke="#e0e0e0"/><path d="M177.3 511.1 A3 3 0 0 0 181.5 515.3 Z" fill="#f0f0f0"/>
  <path d="M187.4 511.6 L190.4 510.2 L193.4 511.6 V514.8 L190.4 516.4 L187.4 514.8 Z M187.4 511.6 L190.4 513 L193.4 511.6 M190.4 513 V516.4"/>
</g>
<text x="145.4" y="516.2" font-family="Liberation Serif, serif" font-style="italic" font-weight="bold" font-size="8.5" fill="#c0c0c0">fx</text>
<!-- layer row icons -->
<path d="M32.7 522.2 L33.6 524.4 L35.9 524.5 L34.1 526 L34.7 528.3 L32.7 527 L30.7 528.3 L31.3 526 L29.5 524.5 L31.8 524.4 Z" fill="#e6e6e6"/>
<g stroke="#d6d6d6" stroke-width="0.8">
  <path d="M116.4 525.2 C116.4 521.4 122.6 521.4 122.6 525.2 Z" fill="#e0e0e0"/><path d="M119.5 525.2 V527.8 M118 528 H121"/>
  <path d="M136.6 528 L142.6 521.6" stroke="#e6e6e6" stroke-width="1"/>
</g>
<path d="M129.3 522.2 V527.6 M126.6 524.9 H132 M127.4 523 L131.2 526.8 M131.2 523 L127.4 526.8" stroke="#5a5a5a" stroke-width="0.7"/>
<g stroke="#c8c8c8" stroke-width="0.8"><circle cx="210.6" cy="525.2" r="3"/><circle cx="210.8" cy="525.4" r="1.1"/></g>
<path d="M270.8 523.6 H276.2 L273.5 527 Z" fill="#e0e0e0"/>
<!-- stopwatch + graph -->
<circle cx="27.6" cy="538.8" r="3" stroke="#39a0dc" stroke-width="1.1"/><path d="M27.6 538.8 V536.6 M26.4 534.6 H28.8" stroke="#39a0dc" stroke-width="0.9"/>
<path d="M36.6 535 V542 H43 M37.4 541 L39.6 537.4 L41.6 539.4" stroke="#c8c8c8" stroke-width="0.8"/>
<!-- playhead -->
<path d="M293.6 495.4 H300.8 V499 L297.2 503.8 L293.6 499 Z" fill="#58aee8"/>
<path d="M297.2 497 V502" stroke="#cfe6f8" stroke-width="0.8"/>
<!-- keyframes -->
<g fill="#5ec4e4"><path d="M294.4 534.8 H300.8 L298.6 538 L300.8 541.2 H294.4 L296.6 538 Z"/><path d="M474.6 534.8 H481 L478.8 538 L481 541.2 H474.6 L476.8 538 Z"/></g>
<!-- ruler ticks -->
<path d="M342 502.2 V504.4 M387 497.2 V504.4 M432 502.2 V504.4 M477 497.2 V504.4 M522 502.2 V504.4 M567 497.2 V504.4 M612 502.2 V504.4 M657 497.2 V504.4 M702 502.2 V504.4 M747 497.2 V504.4 M792 502.2 V504.4 M837 497.2 V504.4 M882 502.2 V504.4 M927 497.2 V504.4 M972 502.2 V504.4 M1017 497.2 V504.4 M1062 502.2 V504.4 M1107 497.2 V504.4 M1152 502.2 V504.4" stroke="#b4b4b4" stroke-width="0.8" stroke-linecap="butt"/>
<!-- bottom zoom -->
<path d="M296.6 689 L299.4 686.4 L302.4 689 Z" fill="#c0c0c0"/>
<path d="M309.6 691 V685.6 L313.2 683.6 L317 685.6 V691 Z" fill="#8a8a8a"/>
<path d="M349 689.6 L353 685.4 L355 687.4 L357.6 684.6 L361.4 689.6 Z" fill="#b4b4b4"/>
<!-- cursor -->
<path d="M546.7 574.3 V584.2 L549 582 L550.8 585.5 L552.4 584.8 L550.8 581.3 L553.8 581 Z" fill="#fff" stroke="#111" stroke-width="0.8"/>

<!-- ===== taskbar icons ===== -->
<path d="M11.6 701 H17.4 L18.8 702.4 H26 V712.4 H11.6 Z" fill="#f2d67c"/><rect x="13.4" y="706.6" width="10.8" height="5.8" fill="#6fb4dc"/><rect x="11.6" y="703.6" width="14.4" height="2.4" fill="#f7e4a0"/>
<circle cx="51.2" cy="706.4" r="7.3" fill="#db4437"/><path d="M51.2 706.4 L44.9 702.8 A7.3 7.3 0 0 0 51.4 713.7 Z" fill="#0f9d58"/><path d="M51.2 706.4 L51.4 713.7 A7.3 7.3 0 0 0 57.6 702.8 Z" fill="#ffcd40"/><path d="M44.9 702.8 A7.3 7.3 0 0 1 57.6 702.8 L51.2 706.4 Z" fill="#db4437"/><circle cx="51.2" cy="706.4" r="3.4" fill="#fff"/><circle cx="51.2" cy="706.4" r="2.6" fill="#4285f4"/>
<path d="M114 700 L123.6 701.6 L121.4 713.4 L110.4 711 Z" fill="#bfe3ea"/><path d="M114 700 L123.6 701.6 L123 704 L113.4 702.4 Z" fill="#5a8a96"/><path d="M112 712 L121.4 713.4 L122.8 711.2" stroke="#e8f4f6" stroke-width="0.8"/>
<rect x="141" y="698.8" width="16" height="15" rx="3" fill="#3d8be0"/><rect x="144.6" y="703.4" width="8.8" height="7" rx="1" fill="#e8f1fb"/><path d="M146.4 701.2 V704 M151.6 701.2 V704" stroke="#e8f1fb" stroke-width="1.2"/><rect x="147.8" y="705.8" width="2.4" height="2.4" fill="#3d8be0"/>
<!-- tray -->
<path d="M935 702.4 C938 702.4 939 701 940.4 700.6 C941.8 701 942.8 702.4 945.8 702.4 C945.8 708 943.4 711 940.4 712.4 C937.4 711 935 708 935 702.4 Z" fill="#3a7bd5"/><path d="M937.4 704 L941 710.4 L944 703.6 Z" fill="#e8f0fa"/><circle cx="944.6" cy="701.2" r="1.3" fill="#e04a3a"/>
<rect x="953.6" y="700.6" width="5.4" height="3" fill="#f0c080"/><rect x="952.8" y="703.2" width="7" height="9" rx="1.4" fill="#e8a050"/>
<path d="M967 702 C969.6 702 970.6 701 971.8 700.6 C973 701 974 702 976.6 702 C976.6 707.6 974.6 710.8 971.8 712.4 C969 710.8 967 707.6 967 702 Z" fill="#f0b030"/><path d="M969.6 703.6 H974 V707.6 L971.8 710 L969.6 707.6 Z" fill="#fbe9c0"/>
<circle cx="987.8" cy="706.6" r="5.5" fill="#c8d830"/><path d="M985.4 703.6 C988 702.6 991 704.6 990 707.6 C989 710 986 710.4 985 709 C986.6 708 987 705.6 985.4 703.6 Z" fill="#3f9a30"/>
<circle cx="1004.4" cy="706.6" r="5" fill="#1f6f86"/><path d="M1001 707.6 C1002 703.6 1007 703 1008 706.6 M1002.4 709.6 C1004 706 1007 707 1006.4 710" stroke="#7ad0e0" stroke-width="1"/>
<circle cx="1020" cy="706.6" r="5.7" fill="#d04818"/>
<g stroke="#e8e8e8" stroke-width="1"><rect x="1033" y="703.6" width="4.8" height="8" rx="1"/><path d="M1034 703.4 V701 H1036.8 V703.4 M1037.6 711.6 L1039 712.8 L1040.8 710.2"/></g>
<rect x="1047.2" y="702" width="10" height="9.4" fill="#4e8a24"/><path d="M1049 707 C1050.6 704.6 1054 704.6 1055.6 706.6 C1054 709 1050.6 709.4 1049 707 Z" stroke="#9fd070" stroke-width="0.8"/>
<path d="M1063.2 706.6 L1068.8 701.4 V711.8 Z" fill="#e07a60"/>
<g stroke="#e8e8e8" stroke-width="1"><rect x="1081.4" y="703" width="7.6" height="5.6"/><path d="M1079 701.6 V707 M1078 702.6 H1080 M1083.4 711 H1087.4 M1085.4 708.6 V711"/></g>
<g stroke="#e8e8e8" stroke-width="0.9"><path d="M1094.4 705 H1096.4 L1099 702.6 V710.6 L1096.4 708.2 H1094.4 Z"/><path d="M1101 704.6 C1102 705.8 1102 707.6 1101 708.8" /><path d="M1102.8 703.2 C1104.4 705 1104.4 708.4 1102.8 710.2" stroke="#8a8a8a"/></g>
</svg>
</body>
</html>
